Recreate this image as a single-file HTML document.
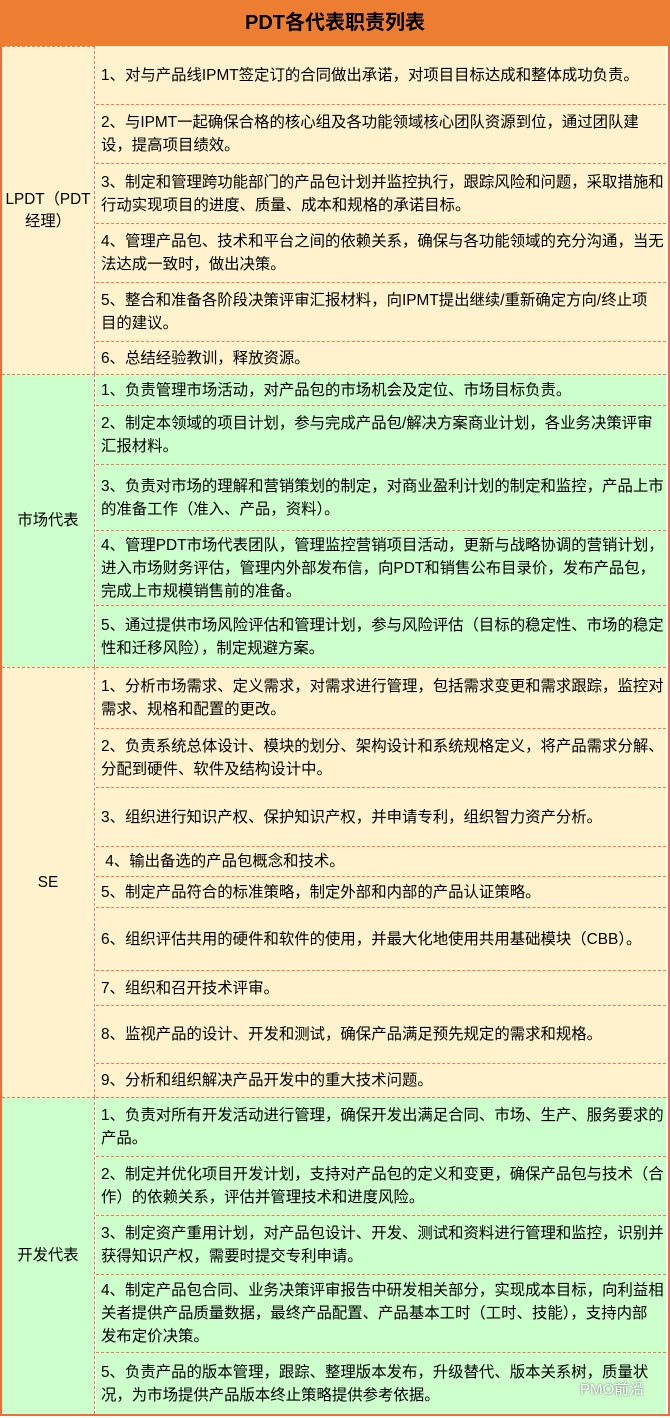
<!DOCTYPE html>
<html><head><meta charset="utf-8"><style>
body{margin:0;width:670px;height:1418px;overflow:hidden;background:#fff;font-family:"Liberation Sans","Microsoft YaHei","Noto Sans CJK SC",sans-serif;color:#000}
#w{position:absolute;left:0;top:0;width:666px;height:1414px;border:2px solid #F26B3A;border-top:none}
.h{position:absolute;left:0;top:0;width:670px;height:46px;background:#ED7D31;font-weight:bold;font-size:20px;text-align:center;line-height:46px}
.c{position:absolute;left:2px;width:93px;border-right:1px dashed #F4784B;display:flex;align-items:center;justify-content:center;text-align:center;font-size:15.3px;line-height:22px;border-top:1px dashed #F4784B;box-sizing:border-box}
.r{position:absolute;left:96px;width:570px;border-top:1px dashed #F4784B;box-sizing:border-box;display:flex;align-items:center;padding-left:5px;font-size:15.4px;line-height:23px;white-space:nowrap}
.y{background:#FFF2CC}.g{background:#CCFFCC}
</style></head><body>
<div id="w"></div>
<div class="h">PDT各代表职责列表</div>

<div class="c y" style="top:46px;height:328px">LPDT（PDT<br>经理）</div>
<div class="r y" style="top:46px;height:58px;border-top:none">1、对与产品线IPMT签定订的合同做出承诺，对项目目标达成和整体成功负责。</div>
<div class="r y" style="top:104px;height:59px">2、与IPMT一起确保合格的核心组及各功能领域核心团队资源到位，通过团队建<br>设，提高项目绩效。</div>
<div class="r y" style="top:163px;height:60px">3、制定和管理跨功能部门的产品包计划并监控执行，跟踪风险和问题，采取措施和<br>行动实现项目的进度、质量、成本和规格的承诺目标。</div>
<div class="r y" style="top:223px;height:59px">4、管理产品包、技术和平台之间的依赖关系，确保与各功能领域的充分沟通，当无<br>法达成一致时，做出决策。</div>
<div class="r y" style="top:282px;height:59px">5、整合和准备各阶段决策评审汇报材料，向IPMT提出继续/重新确定方向/终止项<br>目的建议。</div>
<div class="r y" style="top:341px;height:33px">6、总结经验教训，释放资源。</div>

<div class="c g" style="top:374px;height:293px">市场代表</div>
<div class="r g" style="top:374px;height:31px">1、负责管理市场活动，对产品包的市场机会及定位、市场目标负责。</div>
<div class="r g" style="top:405px;height:59px">2、制定本领域的项目计划，参与完成产品包/解决方案商业计划，各业务决策评审<br>汇报材料。</div>
<div class="r g" style="top:464px;height:66px">3、负责对市场的理解和营销策划的制定，对商业盈利计划的制定和监控，产品上市<br>的准备工作（准入、产品，资料）。</div>
<div class="r g" style="top:530px;height:75px">4、管理PDT市场代表团队，管理监控营销项目活动，更新与战略协调的营销计划，<br>进入市场财务评估，管理内外部发布信，向PDT和销售公布目录价，发布产品包，<br>完成上市规模销售前的准备。</div>
<div class="r g" style="top:605px;height:62px">5、通过提供市场风险评估和管理计划，参与风险评估（目标的稳定性、市场的稳定<br>性和迁移风险），制定规避方案。</div>

<div class="c y" style="top:667px;height:430px">SE</div>
<div class="r y" style="top:667px;height:61px">1、分析市场需求、定义需求，对需求进行管理，包括需求变更和需求跟踪，监控对<br>需求、规格和配置的更改。</div>
<div class="r y" style="top:728px;height:59px">2、负责系统总体设计、模块的划分、架构设计和系统规格定义，将产品需求分解、<br>分配到硬件、软件及结构设计中。</div>
<div class="r y" style="top:787px;height:59px">3、组织进行知识产权、保护知识产权，并申请专利，组织智力资产分析。</div>
<div class="r y" style="top:846px;height:30px">&nbsp;4、输出备选的产品包概念和技术。</div>
<div class="r y" style="top:876px;height:31px">5、制定产品符合的标准策略，制定外部和内部的产品认证策略。</div>
<div class="r y" style="top:907px;height:63px">6、组织评估共用的硬件和软件的使用，并最大化地使用共用基础模块（CBB）。</div>
<div class="r y" style="top:970px;height:35px">7、组织和召开技术评审。</div>
<div class="r y" style="top:1005px;height:58px">8、监视产品的设计、开发和测试，确保产品满足预先规定的需求和规格。</div>
<div class="r y" style="top:1063px;height:34px">9、分析和组织解决产品开发中的重大技术问题。</div>

<div class="c g" style="top:1097px;height:317px">开发代表</div>
<div class="r g" style="top:1097px;height:59px">1、负责对所有开发活动进行管理，确保开发出满足合同、市场、生产、服务要求的<br>产品。</div>
<div class="r g" style="top:1156px;height:59px">2、制定并优化项目开发计划，支持对产品包的定义和变更，确保产品包与技术（合<br>作）的依赖关系，评估并管理技术和进度风险。</div>
<div class="r g" style="top:1215px;height:59px">3、制定资产重用计划，对产品包设计、开发、测试和资料进行管理和监控，识别并<br>获得知识产权，需要时提交专利申请。</div>
<div class="r g" style="top:1274px;height:78px">4、制定产品包合同、业务决策评审报告中研发相关部分，实现成本目标，向利益相<br>关者提供产品质量数据，最终产品配置、产品基本工时（工时、技能），支持内部<br>发布定价决策。</div>
<div class="r g" style="top:1352px;height:62px">5、负责产品的版本管理，跟踪、整理版本发布，升级替代、版本关系树，质量状<br>况，为市场提供产品版本终止策略提供参考依据。</div>
<div style="position:absolute;left:580px;top:1378px;font-size:15px;color:#fff;text-shadow:0 0 2px #555">PMO前沿</div>
</body></html>
